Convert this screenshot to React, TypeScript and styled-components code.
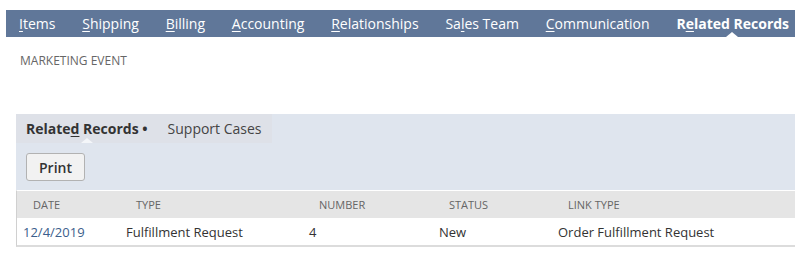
import React from "react";
import styled, { createGlobalStyle } from "styled-components";

const Global = createGlobalStyle`
  html, body { margin: 0; padding: 0; background: #fff; }
  body { font-family: "Open Sans", "Liberation Sans", sans-serif; }
`;

const Page = styled.div`
  width: 795px;
  height: 257px;
  overflow: hidden;
  padding-top: 10px;
  box-sizing: border-box;
`;

const NavBar = styled.nav`
  margin-left: 6px;
  height: 27px;
  background: #607799;
  display: flex;
  align-items: center;
  padding-left: 13px;
`;

const NavItem = styled.div<{ $active?: boolean }>`
  position: relative;
  color: #fff;
  font-size: 14px;
  font-weight: ${(p) => (p.$active ? 700 : 400)};
  margin-right: ${(p) => (p.$active ? 0 : 26.8)}px;
  white-space: nowrap;
  line-height: 27px;
  u { text-decoration: underline; text-underline-offset: 2px; }
`;

const Caret = styled.span<{ $left: number; $color: string }>`
  position: absolute;
  bottom: 0;
  left: ${(p) => p.$left}px;
  width: 0;
  height: 0;
  border-left: 6px solid transparent;
  border-right: 6px solid transparent;
  border-bottom: 5px solid ${(p) => p.$color};
`;

const FieldLabel = styled.div`
  margin: 16px 0 0 20px;
  font-size: 12px;
  color: #666;
  text-transform: uppercase;
  line-height: 15px;
`;

const Panel = styled.section`
  margin: 46px 0 0 16px;
  background: #dfe5ee;
`;

const TabStrip = styled.div`
  display: flex;
`;

const Tabs = styled.div`
  display: flex;
  background: #dee1e8;
  height: 29px;
  align-items: center;
  padding: 0 10px;
  gap: 20px;
`;

const Tab = styled.div<{ $active?: boolean }>`
  position: relative;
  font-size: 14px;
  color: ${(p) => (p.$active ? "#333" : "#444")};
  font-weight: ${(p) => (p.$active ? 700 : 400)};
  line-height: 29px;
  white-space: nowrap;
  u { text-decoration: underline; text-underline-offset: 2px; }
`;

const Toolbar = styled.div`
  padding: 10px 10px 9px;
`;

const Button = styled.button`
  display: block;
  font-family: "Open Sans", "Liberation Sans", sans-serif;
  font-size: 14px;
  color: #333;
  background: #f2f2f2;
  border: 1px solid #b2b2b2;
  border-radius: 3px;
  height: 28px;
  padding: 0 12px;
  font-weight: 600;
`;

const TableWrap = styled.div`
  margin-left: 16px;
  border-left: 1px solid #d0d0d0;
  border-top: 1px solid #fff;
  border-bottom: 2px solid #dcdcdc;
  background: #fff;
`;

const Grid = styled.div`
  display: grid;
  grid-template-columns: 103px 183px 130px 119px 1fr;
`;

const HeadRow = styled(Grid)`
  background: #e5e5e5;
  height: 27px;
  align-items: center;
`;

const DataRow = styled(Grid)`
  height: 27px;
  align-items: center;
`;

const HeadCell = styled.div`
  font-size: 11px;
  color: #666;
  padding-left: 16px;
  white-space: nowrap;
`;

const Cell = styled.div<{ $link?: boolean }>`
  font-size: 13px;
  color: ${(p) => (p.$link ? "#3b5e8c" : "#333")};
  padding-left: 6px;
  white-space: nowrap;
`;

export default function App() {
  return (
    <Page>
      <Global />
      <NavBar>
        <NavItem><u>I</u>tems</NavItem>
        <NavItem><u>S</u>hipping</NavItem>
        <NavItem><u>B</u>illing</NavItem>
        <NavItem><u>A</u>ccounting</NavItem>
        <NavItem><u>R</u>elationships</NavItem>
        <NavItem>Sa<u>l</u>es Team</NavItem>
        <NavItem><u>C</u>ommunication</NavItem>
        <NavItem $active>
          R<u>e</u>lated Records
          <Caret $left={50} $color="#fff" />
        </NavItem>
      </NavBar>
      <FieldLabel>Marketing Event</FieldLabel>
      <Panel>
        <TabStrip>
          <Tabs>
            <Tab $active>
              Relate<u>d</u> Records •
              <Caret $left={55} $color="#f4f6f9" />
            </Tab>
            <Tab>Support Cases</Tab>
          </Tabs>
        </TabStrip>
        <Toolbar>
          <Button>Print</Button>
        </Toolbar>
      </Panel>
      <TableWrap>
        <HeadRow>
          <HeadCell>DATE</HeadCell>
          <HeadCell>TYPE</HeadCell>
          <HeadCell>NUMBER</HeadCell>
          <HeadCell>STATUS</HeadCell>
          <HeadCell>LINK TYPE</HeadCell>
        </HeadRow>
        <DataRow>
          <Cell $link>12/4/2019</Cell>
          <Cell>Fulfillment Request</Cell>
          <Cell>4</Cell>
          <Cell>New</Cell>
          <Cell>Order Fulfillment Request</Cell>
        </DataRow>
      </TableWrap>
    </Page>
  );
}
